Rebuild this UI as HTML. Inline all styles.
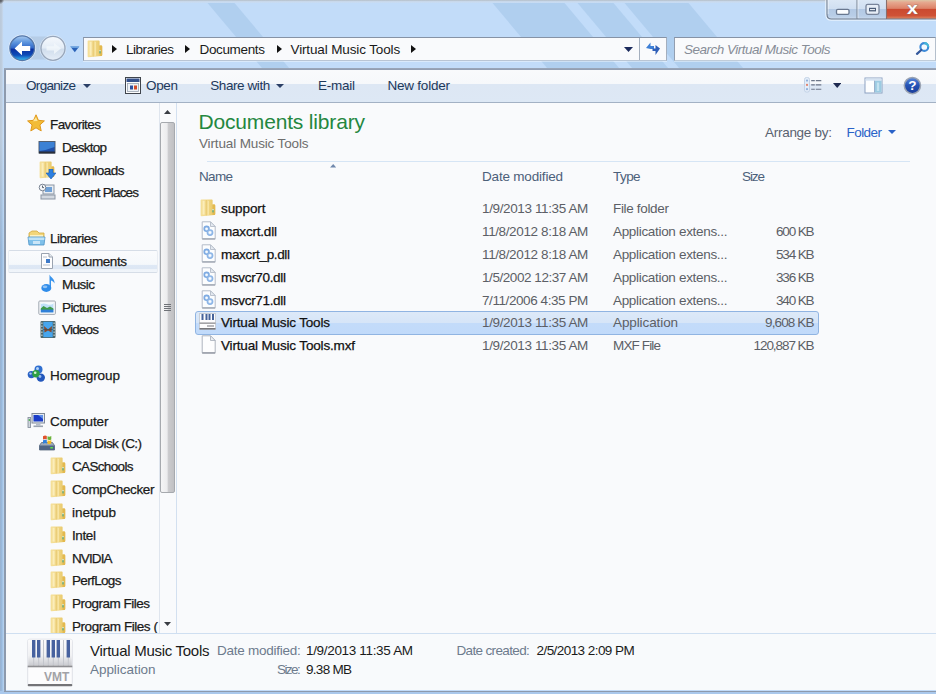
<!DOCTYPE html>
<html><head><meta charset="utf-8"><title>Virtual Music Tools</title>
<style>
html,body{margin:0;padding:0}
body{width:936px;height:694px;overflow:hidden;position:relative;background:#c2dcf9;font-family:"Liberation Sans", sans-serif;font-size:13.5px}
.abs,.t,.ic{position:absolute}
.t{height:20px;line-height:20px;white-space:nowrap}
.bd{-webkit-text-stroke:0.25px currentColor}
#glass{left:0;top:0;width:936px;height:694px;background:#c2dcf9;overflow:hidden}
.streak{position:absolute;top:0;height:110px;transform-origin:0 0;transform:skewX(40deg);}
</style></head><body>
<svg width="0" height="0" style="position:absolute"><defs>
<linearGradient id="fg" x1="0" y1="0" x2="1" y2="0"><stop offset="0" stop-color="#f5e09a"/><stop offset=".45" stop-color="#f2d98a"/><stop offset=".8" stop-color="#eacb6e"/><stop offset="1" stop-color="#e3bc56"/></linearGradient>
</defs></svg>

<div id="glass" class="abs">
<div class="streak" style="left:205px;width:27px;background:rgba(150,188,226,.40)"></div>
<div class="streak" style="left:490px;width:72px;background:rgba(150,188,226,.40)"></div>
<div class="streak" style="left:575px;width:36px;background:rgba(150,188,226,.40)"></div>
<div class="streak" style="left:622px;width:64px;background:rgba(150,188,226,.40)"></div>
</div>
<div class="abs" style="left:0;top:0;width:4px;height:694px;background:linear-gradient(90deg,#9eb3cf 0,#94b5d9 30%,#a4c3e5 62%,#b8d5f3 100%)"></div>
<div class="abs" style="left:0;top:0;width:4px;height:300px;background:linear-gradient(90deg,#bac9da 0,#bdccdd 35%,#c3d5ea 65%,#c2dcf9 90%);-webkit-mask-image:linear-gradient(#000 0,#000 45%,transparent 85%);mask-image:linear-gradient(#000 0,#000 45%,transparent 85%)"></div>
<div class="abs" style="left:0;top:0;width:936px;height:3px;background:linear-gradient(#b4c0cc 0,#bfcbd8 30%,#c8d8ea 45%,#c9dbf1 80%,#c2dcf9 100%)"></div>
<div class="abs" style="left:0;top:0;width:4px;height:4px;background:radial-gradient(circle at 0 0,#55595f 0,#6a6e75 35%,rgba(150,160,172,0) 75%)"></div>
<div class="abs" style="left:0;top:691px;width:936px;height:3px;background:#a9c8ec"></div>
<svg class="abs" style="left:824px;top:0" width="112" height="23" viewBox="0 0 112 23">
<defs>
<linearGradient id="cb" x1="0" y1="0" x2="0" y2="1"><stop offset="0" stop-color="#dbe7f5"/><stop offset=".46" stop-color="#d0dff1"/><stop offset=".5" stop-color="#b3c9e4"/><stop offset=".85" stop-color="#b9cee7"/><stop offset="1" stop-color="#cddcef"/></linearGradient>
<linearGradient id="cr" x1="0" y1="0" x2="0" y2="1"><stop offset="0" stop-color="#dcc6a6"/><stop offset=".12" stop-color="#e6a88f"/><stop offset=".44" stop-color="#dd8268"/><stop offset=".5" stop-color="#cb4a30"/><stop offset=".82" stop-color="#cf5236"/><stop offset="1" stop-color="#dd8a66"/></linearGradient>
<clipPath id="cc"><path d="M3 -2 H120 V19 H7.500 Q3 19 3 14.5 Z"/></clipPath>
</defs>
<path d="M2 -2 H121 V20 H7.500 Q2 20 2 14.5 Z" fill="none" stroke="#ffffff" stroke-opacity=".6" stroke-width="1.6"/>
<g clip-path="url(#cc)">
<rect x="3" y="0" width="30" height="19" fill="url(#cb)"/>
<rect x="33" y="0" width="30" height="19" fill="url(#cb)"/>
<rect x="62.500" y="0" width="60" height="19" fill="url(#cr)"/>
</g>
<path d="M3 -2 V14.5 Q3 19 7.500 19 H120" fill="none" stroke="#6e7b8c" stroke-width="1.1"/>
<path d="M33 0 V19" stroke="#7d8998" stroke-width="1.1"/><path d="M62.500 0 V19" stroke="#8a6f6c" stroke-width="1.1"/>
<path d="M34 0 V18 M4.200 0 V14" stroke="#fff" stroke-opacity=".5" stroke-width="1"/>
<rect x="12.500" y="9.300" width="12.500" height="5" rx="1.300" fill="#fbfcfe" stroke="#68778f" stroke-width="1.300"/>
<rect x="42" y="4.300" width="13" height="10" rx="1.800" fill="#e6edf6" stroke="#78849a" stroke-width="1.300"/>
<rect x="45" y="7.800" width="7" height="3.600" fill="#4c5d78"/><rect x="46" y="9.100" width="5" height="1" fill="#f4f7fb"/>
<text transform="translate(88.500 14.400) scale(1.15 1)" font-family="Liberation Sans, sans-serif" font-weight="bold" font-size="17" fill="#fdfdfd" stroke="#8a6a66" stroke-width=".7" paint-order="stroke" text-anchor="middle">x</text>
</svg>
<svg class="abs" style="left:6px;top:31px" width="78" height="34" viewBox="0 0 78 34">
<defs>
<linearGradient id="bk" x1="0" y1="0" x2="0" y2="1"><stop offset="0" stop-color="#a9c9ee"/><stop offset=".25" stop-color="#5f97de"/><stop offset=".5" stop-color="#2f66c8"/><stop offset=".53" stop-color="#0a2f9e"/><stop offset=".78" stop-color="#0f4cb8"/><stop offset="1" stop-color="#38c0f4"/></linearGradient>
<linearGradient id="fw" x1="0" y1="0" x2="0" y2="1"><stop offset="0" stop-color="#f6f9fd"/><stop offset=".48" stop-color="#e4edf7"/><stop offset=".54" stop-color="#d0ddec"/><stop offset="1" stop-color="#e6eef8"/></linearGradient>
</defs>
<rect x="14" y="5.500" width="36" height="23" rx="11" fill="#b2c8e0" opacity=".75"/>
<circle cx="16.200" cy="17.200" r="13.400" fill="none" stroke="#e6eff9" stroke-width="1" opacity=".85"/>
<circle cx="16.200" cy="17.200" r="12.300" fill="url(#bk)" stroke="#5577a8" stroke-width="1.300"/>
<path d="M8.600 17.400 L16 10.600 V14.900 H24.200 V19.900 H16 V24.200 Z" fill="#fff"/>
<circle cx="47" cy="17.300" r="13" fill="none" stroke="#e6eff9" stroke-width="1" opacity=".7"/>
<circle cx="47" cy="17.300" r="12" fill="url(#fw)" stroke="#98a6ba" stroke-width="1.300"/>
<path d="M55 17.400 L48 11.800 V15.300 H40.500 V19.500 H48 V23 Z" fill="#f3f7fb" opacity=".8"/>
<path d="M64.300 15.600 H73.300 L68.800 21.200 Z" fill="#2a62b8"/><path d="M64.300 15.600 H73.300 L72.300 16.800 H65.300Z" fill="#7db4ea"/>
</svg>
<div class="abs" style="left:83px;top:36.5px;width:583.5px;height:24px;box-sizing:border-box;background:#f9fafc;border:1px solid;border-color:#8693a6 #a4afbe #b9c5d4 #929eb0;border-top-width:1.5px;box-shadow:0 1px 0 rgba(255,255,255,.4)"></div>
<div class="abs" style="left:639px;top:38px;width:1px;height:21.5px;background:#a4afbe"></div>
<svg class="ic" style="left:87px;top:40px" width="16" height="18" viewBox="0 0 16 18">
<path d="M0.600 1.200 Q0.600 0.500 1.300 0.500 H11.800 Q12.600 0.500 12.600 1.300 V5.600 H14.300 Q15.200 5.600 15.200 6.500 V15 Q15.200 15.900 14.300 15.900 L1.500 17.200 Q0.600 17.200 0.600 16.300 Z" fill="url(#fg)"/>
<path d="M12.600 5.600 H14.300 Q15.200 5.600 15.200 6.500 V15 Q15.200 15.900 14.300 15.900 L12.600 16.100Z" fill="#e3b94f"/>
<rect x="2.600" y="1.800" width="2" height="13.800" fill="#fff6d0" opacity=".65"/>
<rect x="7.600" y="1.800" width="1.400" height="14" fill="#fff3c4" opacity=".5"/>
<rect x="5.800" y="1" width="1" height="15.600" fill="#d9ae48" opacity=".35"/>
<rect x="12.300" y="10" width="1.400" height="3.400" fill="#5fae8a"/><rect x="12.300" y="10" width="1.400" height="1.200" fill="#f6f0d0"/>
</svg>
<svg class="ic" style="left:112px;top:45px" width="5" height="8" viewBox="0 0 5 8"><path d="M0 0 L5 4 L0 8Z" fill="#111"/></svg>
<div class="t " style="left:126px;top:39.5px;font-size:13.5px;color:#1a1a1a;letter-spacing:-0.47px;">Libraries</div>
<svg class="ic" style="left:185px;top:45px" width="5" height="8" viewBox="0 0 5 8"><path d="M0 0 L5 4 L0 8Z" fill="#111"/></svg>
<div class="t " style="left:199.5px;top:39.5px;font-size:13.5px;color:#1a1a1a;letter-spacing:-0.35px;">Documents</div>
<svg class="ic" style="left:276.5px;top:45px" width="5" height="8" viewBox="0 0 5 8"><path d="M0 0 L5 4 L0 8Z" fill="#111"/></svg>
<div class="t " style="left:290.5px;top:39.5px;font-size:13.5px;color:#1a1a1a;letter-spacing:-0.13px;">Virtual Music Tools</div>
<svg class="ic" style="left:411px;top:45px" width="5" height="8" viewBox="0 0 5 8"><path d="M0 0 L5 4 L0 8Z" fill="#111"/></svg>
<svg class="ic" style="left:624px;top:47px" width="9" height="5" viewBox="0 0 9 5"><path d="M0 0 H9 L4.5 5Z" fill="#1b2a5c"/></svg>
<svg class="ic" style="left:644px;top:40px" width="18" height="18" viewBox="0 0 18 18">
<path d="M2 8 L6.5 2.5 L6.5 6 H10 V9 H6.5Z" fill="#3d7fd6"/><path d="M16 8.5 L11.5 15 V11 H8.5 V8.5 H11.5 V5Z" fill="#2f5fb8" transform="translate(0,0)"/></svg>
<div class="abs" style="left:674px;top:36.5px;width:261.5px;height:24px;box-sizing:border-box;background:#f9fafc;border:1px solid;border-color:#8693a6 #b4bfcc #c0ccd9 #929eb0;border-top-width:1.5px;box-shadow:0 1px 0 rgba(255,255,255,.4)"></div>
<div class="t " style="left:684px;top:39.5px;font-size:13.5px;color:#878d97;letter-spacing:-0.50px;font-style:italic;">Search Virtual Music Tools</div>
<svg class="ic" style="left:914px;top:40px" width="18" height="18" viewBox="0 0 18 18">
<circle cx="10.300" cy="7" r="3.900" fill="#f4f9fe" stroke="#3d8ad8" stroke-width="2.100"/><path d="M10.300 3.100 A3.900 3.900 0 0 1 14.200 7" stroke="#46b8d8" stroke-width="2.100" fill="none"/><path d="M7.300 10 L3 13.800" stroke="#34589c" stroke-width="2.300" stroke-linecap="round"/></svg>
<div class="abs" style="left:4px;top:68px;width:2px;height:624px;background:#8d9aad;border-radius:0 0 0 2px"></div>
<div class="abs" style="left:4px;top:68px;width:932px;height:2px;background:linear-gradient(#9ca8ba,#909cb0)"></div>
<div class="abs" style="left:6px;top:70px;width:930px;height:32px;background:linear-gradient(#f9fafc 0,#f6f8fb 44%,#dde7f4 45%,#dde8f5 100%)"></div>
<div class="abs" style="left:6px;top:102px;width:930px;height:1px;background:#a3b1c4"></div>
<div class="t " style="left:26px;top:76.0px;font-size:13.5px;color:#1e395b;letter-spacing:-0.68px;">Organize</div>
<svg class="ic" style="left:83px;top:84px" width="8" height="4" viewBox="0 0 8 4"><path d="M0 0H8L4 4Z" fill="#2b3f66"/></svg>
<svg class="ic" style="left:125px;top:77px" width="16" height="17" viewBox="0 0 16 17">
<rect x=".5" y=".5" width="15" height="16" fill="#fbfcfd" stroke="#3f444c"/><rect x="1.5" y="1.5" width="13" height="3.500" fill="#34508c"/>
<rect x="2.5" y="6.5" width="11" height="8" fill="#eef2f7" stroke="#9aa3b0" stroke-width=".8"/>
<rect x="5" y="8.5" width="3" height="4" fill="#2c4fa0"/><rect x="9" y="8.5" width="3" height="4" fill="#d24a2a"/></svg>
<div class="t " style="left:146px;top:76.0px;font-size:13.5px;color:#1e395b;letter-spacing:-0.34px;">Open</div>
<div class="t " style="left:210.3px;top:76.0px;font-size:13.5px;color:#1e395b;letter-spacing:-0.43px;">Share with</div>
<svg class="ic" style="left:276px;top:84px" width="8" height="4" viewBox="0 0 8 4"><path d="M0 0H8L4 4Z" fill="#2b3f66"/></svg>
<div class="t " style="left:318px;top:76.0px;font-size:13.5px;color:#1e395b;letter-spacing:-0.25px;">E-mail</div>
<div class="t " style="left:387.4px;top:76.0px;font-size:13.5px;color:#1e395b;letter-spacing:-0.21px;">New folder</div>
<svg class="ic" style="left:804px;top:77px" width="18" height="16" viewBox="0 0 18 16">
<rect x="0.500" y="0.500" width="5" height="14.600" rx="2" fill="#e4edf8" stroke="#c3d2e6"/>
<circle cx="3" cy="3.600" r="1.100" fill="#8fb0dc"/><circle cx="3" cy="7.900" r="1.100" fill="#e0806a"/><circle cx="3" cy="12.200" r="1.100" fill="#8fb0dc"/>
<path d="M7.200 3.600H10.800M11.800 3.600H17.300M7.200 7.900H10.800M11.800 7.900H17.300M7.200 12.200H10.800M11.800 12.200H17.300" stroke="#6c7688" stroke-width="1.100"/></svg>
<svg class="ic" style="left:832.600px;top:83px" width="8.400" height="5" viewBox="0 0 8.400 5"><path d="M0 0H8.400L4.200 5Z" fill="#1e2a50"/></svg>
<svg class="ic" style="left:864px;top:77px" width="19" height="17" viewBox="0 0 19 17">
<rect x="1" y="1" width="17" height="15" fill="#fdfeff" stroke="#8da2c2" stroke-width="1"/><rect x="1.500" y="1.500" width="16" height="2.200" fill="#d6e3f2"/>
<rect x="10.500" y="3.700" width="7" height="11.800" fill="#9ccbe2"/><rect x="12.800" y="5.500" width="2.400" height="8.500" fill="#c4e2f0"/>
<path d="M10.500 3.700V15.500" stroke="#8da2c2" stroke-width=".8"/></svg>
<svg class="ic" style="left:902px;top:75px" width="21" height="21" viewBox="0 0 21 21">
<defs><linearGradient id="hp" x1="0" y1="0" x2="0" y2="1"><stop offset="0" stop-color="#5a88dc"/><stop offset=".5" stop-color="#2452b4"/><stop offset="1" stop-color="#1a3c98"/></linearGradient></defs>
<circle cx="10.400" cy="10.600" r="8.100" fill="url(#hp)" stroke="#9aa3b2" stroke-width="1.500"/>
<text x="10.400" y="15.400" font-family="Liberation Sans, sans-serif" font-weight="bold" font-size="13.500" fill="#fff" text-anchor="middle">?</text></svg>
<div class="abs" style="left:6px;top:103px;width:930px;height:531px;background:#f9fafc"></div>
<div class="abs" style="left:159px;top:103px;width:1px;height:530px;background:#dfe5ee"></div>
<div class="abs" style="left:176px;top:103px;width:1px;height:530px;background:#d3e0f0"></div>
<div class="abs" style="left:160px;top:122px;width:15px;height:371px;box-sizing:border-box;border:1px solid #a6a9ae;border-radius:2px;background:linear-gradient(90deg,#f5f5f6 0,#ececee 46%,#cbcbce 58%,#c0c0c3 100%)"></div>
<div class="abs" style="left:164px;top:304px;width:7px;height:1px;background:#6f7278;box-shadow:0 2px 0 #6f7278,0 4px 0 #6f7278,0 6px 0 #6f7278"></div>
<svg class="ic" style="left:164px;top:110px" width="7" height="4" viewBox="0 0 7 4"><path d="M0 4H7L3.5 0Z" fill="#3a3d44"/></svg>
<svg class="ic" style="left:164px;top:622px" width="7" height="4" viewBox="0 0 7 4"><path d="M0 0H7L3.5 4Z" fill="#3a3d44"/></svg>
<div class="abs" style="left:8px;top:250px;width:150px;height:23px;box-sizing:border-box;border:1px solid #d6dde7;border-left-color:#e9edf3;border-right-color:#e9edf3;border-radius:2px;background:linear-gradient(#fafbfd 0,#f5f8fb 64%,#dee8f5 67%,#dde7f4 84%,#eef3f9 88%,#f1f5fa 100%)"></div>
<div class="abs" style="left:6px;top:103px;width:153px;height:530px;overflow:hidden"><div class="abs" style="left:-6px;top:-103px">
<svg class="ic" style="left:27px;top:114.0px" width="18" height="18" viewBox="0 0 18 18"><path d="M9 0.8 L11.4 6.3 L17.4 6.9 L12.9 10.9 L14.2 16.9 L9 13.8 L3.8 16.9 L5.1 10.9 L0.6 6.9 L6.6 6.3 Z" fill="#f2bc38" stroke="#e0981c" stroke-width="1"/><path d="M9 3 L10.6 7 L6 7.3 Z" fill="#fde79a"/></svg>
<div class="t bd" style="left:50px;top:115.0px;font-size:13.5px;color:#1a1a1a;letter-spacing:-0.57px;">Favorites</div>
<svg class="ic" style="left:38px;top:138.62px" width="18" height="18" viewBox="0 0 18 18"><rect x="1" y="2.5" width="16" height="11.5" fill="#1f4fa8" stroke="#55606f" stroke-width="1"/><path d="M1.5 3 H16.5 V8 Q9 11 1.5 12Z" fill="#3f86d8" opacity=".9"/><rect x="1" y="12.5" width="16" height="2" fill="#2a2f3a"/></svg>
<div class="t bd" style="left:62px;top:137.82px;font-size:13.5px;color:#1a1a1a;letter-spacing:-0.76px;">Desktop</div>
<svg class="ic" style="left:39px;top:160.64px" width="16" height="18" viewBox="0 0 16 18">
<path d="M0.600 1.200 Q0.600 0.500 1.300 0.500 H11.800 Q12.600 0.500 12.600 1.300 V5.600 H14.300 Q15.200 5.600 15.200 6.500 V15 Q15.200 15.900 14.300 15.900 L1.500 17.200 Q0.600 17.200 0.600 16.300 Z" fill="url(#fg)"/>
<path d="M12.600 5.600 H14.300 Q15.200 5.600 15.200 6.500 V15 Q15.200 15.900 14.300 15.900 L12.600 16.100Z" fill="#e3b94f"/>
<rect x="2.600" y="1.800" width="2" height="13.800" fill="#fff6d0" opacity=".65"/>
<rect x="7.600" y="1.800" width="1.400" height="14" fill="#fff3c4" opacity=".5"/>
<rect x="5.800" y="1" width="1" height="15.600" fill="#d9ae48" opacity=".35"/>
<rect x="12.300" y="10" width="1.400" height="3.400" fill="#5fae8a"/><rect x="12.300" y="10" width="1.400" height="1.200" fill="#f6f0d0"/>
</svg><svg class="ic" style="left:46px;top:168.64px" width="10" height="10" viewBox="0 0 10 10"><path d="M3 0 H7 V4 H10 L5 10 L0 4 H3Z" fill="#2c7fe0" stroke="#1b5cb4" stroke-width=".6"/></svg>
<div class="t bd" style="left:62px;top:160.64px;font-size:13.5px;color:#1a1a1a;letter-spacing:-0.54px;">Downloads</div>
<svg class="ic" style="left:38px;top:183.46px" width="18" height="18" viewBox="0 0 18 18"><rect x="5" y="2" width="11" height="9" fill="#e8edf3" stroke="#8b95a3"/><rect x="7" y="4" width="7" height="5" fill="#6fa0d6"/><circle cx="4.5" cy="4.5" r="3.3" fill="#f4f6f9" stroke="#7b8594"/><path d="M4.5 2.6 V4.6 H6" stroke="#4a5360" stroke-width=".9" fill="none"/><rect x="3" y="12" width="14" height="4" fill="#d3d9e1" stroke="#8b95a3"/></svg>
<div class="t bd" style="left:62px;top:183.46px;font-size:13.5px;color:#1a1a1a;letter-spacing:-0.84px;">Recent Places</div>
<svg class="ic" style="left:27px;top:229.1px" width="19" height="18" viewBox="0 0 19 18"><path d="M2 4 L5 2 H10 L12 4 H17 V9 H2Z" fill="#f2d67a" stroke="#d2a83c" stroke-width=".8"/><rect x="3" y="6" width="13" height="5" fill="#fbf1c4"/><path d="M1 8 H18 L17 16 H2Z" fill="#7fc0ea" stroke="#4d93c7" stroke-width=".8"/><path d="M1.5 8.5 H17.5 L17.2 11 H1.8Z" fill="#bfe3f7"/><rect x="6" y="12" width="7" height="3" fill="#eaf5fc" opacity=".7"/></svg>
<div class="t bd" style="left:50px;top:229.1px;font-size:13.5px;color:#1a1a1a;letter-spacing:-0.54px;">Libraries</div>
<svg class="ic" style="left:38px;top:251.92000000000002px" width="18" height="18" viewBox="0 0 18 18"><path d="M3.5 1.5 H11 L14.5 5 V16.5 H3.5Z" fill="#fdfdfe" stroke="#9aa3b0"/><path d="M11 1.5 V5 H14.5" fill="#e6eaf0" stroke="#9aa3b0"/><rect x="8" y="7" width="4" height="4" fill="#3d79c8"/><path d="M5 5 H9 M5 13 H12" stroke="#b8c0cc" stroke-width="1"/></svg>
<div class="t bd" style="left:62px;top:251.92px;font-size:13.5px;color:#1a1a1a;letter-spacing:-0.41px;">Documents</div>
<svg class="ic" style="left:39px;top:273.74px" width="19" height="19" viewBox="0 0 19 19"><path d="M10.500 0.500 C11.500 3.500 16 4.500 15.500 9.500 C14.300 6.800 12.600 7 12 6.400 V14 H10.500Z" fill="#3a94ec"/><ellipse cx="7.300" cy="14" rx="5" ry="3.900" fill="#2f8cea"/><ellipse cx="6" cy="12.800" rx="2.400" ry="1.400" fill="#a8d0f8" opacity=".8"/></svg>
<div class="t bd" style="left:62px;top:274.74px;font-size:13.5px;color:#1a1a1a;letter-spacing:-0.57px;">Music</div>
<svg class="ic" style="left:38px;top:297.56px" width="18" height="18" viewBox="0 0 18 18"><rect x="0.800" y="3" width="16.600" height="13.400" rx="1" fill="#f6f7f9" stroke="#a2a8b2"/><rect x="2.800" y="5" width="12.600" height="9.400" fill="#bfe0f8"/><path d="M2.800 6 Q6 4.800 9 6.200 T15.400 5.800 V5 H2.800Z" fill="#f4fafe"/><path d="M2.800 10.500 L5.500 8 L9 10 L12 8.600 L15.400 10.600 V12 H2.800Z" fill="#3f9a4a"/><rect x="2.800" y="11.600" width="12.600" height="2.800" fill="#2f7fd8"/></svg>
<div class="t bd" style="left:62px;top:297.56px;font-size:13.5px;color:#1a1a1a;letter-spacing:-0.61px;">Pictures</div>
<svg class="ic" style="left:38.5px;top:319.88px" width="18" height="19" viewBox="0 0 18 19"><rect x="1.500" y="1" width="15" height="17" rx="1" fill="#4c666c"/><rect x="4.300" y="1.800" width="9.400" height="15.400" fill="#46a6ee"/><path d="M5 6 L9 9.500 L13 6 L12.500 12.500 L9 10.500 L5.500 12.500Z" fill="#8a4a2c"/><rect x="4.300" y="9" width="9.400" height="1" fill="#3a4e54" opacity=".7"/><path d="M2.900 2.500v1.600M2.900 5.500v1.600M2.900 8.500v1.600M2.900 11.500v1.600M2.900 14.500v1.600M15.100 2.500v1.600M15.100 5.500v1.600M15.100 8.500v1.600M15.100 11.500v1.600M15.100 14.500v1.600" stroke="#c8dadc" stroke-width="1.100"/></svg>
<div class="t bd" style="left:62px;top:320.38px;font-size:13.5px;color:#1a1a1a;letter-spacing:-0.81px;">Videos</div>
<svg class="ic" style="left:27px;top:365.02px" width="19" height="18" viewBox="0 0 19 18"><circle cx="11.500" cy="4.600" r="4" fill="#2f6ed0"/><circle cx="4.300" cy="9.600" r="3.600" fill="#2a62c4"/><circle cx="13.800" cy="12.600" r="4.200" fill="#2458bc"/><circle cx="9" cy="8.800" r="3.800" fill="#2ea043"/><circle cx="10.500" cy="3.400" r="1.500" fill="#b4d4f6"/><circle cx="3.500" cy="8.600" r="1.200" fill="#a8c8f0"/><circle cx="8.200" cy="7.800" r="1.300" fill="#d8f4d8"/><circle cx="13" cy="11.500" r="1.400" fill="#9cbcec"/></svg>
<div class="t bd" style="left:50px;top:366.02px;font-size:13.5px;color:#1a1a1a;letter-spacing:-0.07px;">Homegroup</div>
<svg class="ic" style="left:27px;top:411.66px" width="18" height="18" viewBox="0 0 18 18"><rect x="5" y="1.500" width="12.500" height="9.500" fill="#e4e9ef" stroke="#7e8897"/><rect x="6.500" y="3" width="9.500" height="6.500" fill="#1a3cc8"/><path d="M11 3H16V7Z" fill="#5f8fe8"/><rect x="9" y="11.500" width="4.500" height="2" fill="#b4bcc8"/><rect x="6.500" y="13.500" width="9.500" height="1.600" fill="#9aa3b0"/><rect x="1" y="5.500" width="2.600" height="10" fill="#cfd5dd" stroke="#7e8897" stroke-width=".8"/><rect x="1.700" y="7" width="1.200" height="2" fill="#4caf50"/></svg>
<div class="t bd" style="left:50px;top:411.66px;font-size:13.5px;color:#1a1a1a;letter-spacing:-0.11px;">Computer</div>
<svg class="ic" style="left:38px;top:434.48px" width="18" height="18" viewBox="0 0 18 18"><path d="M1.500 11.500 L3.500 8.500 H14.500 L16.500 11.500 V16 H1.500Z" fill="#9aa8ba" stroke="#5c6a7e" stroke-width=".8"/><rect x="1.500" y="11.500" width="15" height="4.500" fill="#4f6484"/><path d="M5 2.200 Q7 1 8.800 2 V5.400 Q7 4.400 5 5.600Z" fill="#e0522c"/><path d="M9.500 2.200 Q11.300 3.200 13.300 2 V5.400 Q11.300 6.600 9.500 5.600Z" fill="#6cb33a"/><path d="M5 6.300 Q7 5.100 8.800 6.100 V9.500 Q7 8.500 5 9.700Z" fill="#2f80dc"/><path d="M9.500 6.300 Q11.300 7.300 13.300 6.100 V9.500 Q11.300 10.700 9.500 9.700Z" fill="#f2bb28"/><rect x="12.300" y="13" width="2.600" height="1.500" fill="#5fe04c"/></svg>
<div class="t bd" style="left:62px;top:434.48px;font-size:13.5px;color:#1a1a1a;letter-spacing:-0.61px;">Local Disk (C:)</div>
<svg class="ic" style="left:50px;top:457.3px" width="16" height="18" viewBox="0 0 16 18">
<path d="M0.600 1.200 Q0.600 0.500 1.300 0.500 H11.800 Q12.600 0.500 12.600 1.300 V5.600 H14.300 Q15.200 5.600 15.200 6.500 V15 Q15.200 15.900 14.300 15.900 L1.500 17.200 Q0.600 17.200 0.600 16.300 Z" fill="url(#fg)"/>
<path d="M12.600 5.600 H14.300 Q15.200 5.600 15.200 6.500 V15 Q15.200 15.900 14.300 15.900 L12.600 16.100Z" fill="#e3b94f"/>
<rect x="2.600" y="1.800" width="2" height="13.800" fill="#fff6d0" opacity=".65"/>
<rect x="7.600" y="1.800" width="1.400" height="14" fill="#fff3c4" opacity=".5"/>
<rect x="5.800" y="1" width="1" height="15.600" fill="#d9ae48" opacity=".35"/>
<rect x="12.300" y="10" width="1.400" height="3.400" fill="#5fae8a"/><rect x="12.300" y="10" width="1.400" height="1.200" fill="#f6f0d0"/>
</svg>
<div class="t bd" style="left:72px;top:457.3px;font-size:13.5px;color:#1a1a1a;letter-spacing:-0.66px;">CASchools</div>
<svg class="ic" style="left:50px;top:480.12px" width="16" height="18" viewBox="0 0 16 18">
<path d="M0.600 1.200 Q0.600 0.500 1.300 0.500 H11.800 Q12.600 0.500 12.600 1.300 V5.600 H14.300 Q15.200 5.600 15.200 6.500 V15 Q15.200 15.900 14.300 15.900 L1.500 17.200 Q0.600 17.200 0.600 16.300 Z" fill="url(#fg)"/>
<path d="M12.600 5.600 H14.300 Q15.200 5.600 15.200 6.500 V15 Q15.200 15.900 14.300 15.900 L12.600 16.100Z" fill="#e3b94f"/>
<rect x="2.600" y="1.800" width="2" height="13.800" fill="#fff6d0" opacity=".65"/>
<rect x="7.600" y="1.800" width="1.400" height="14" fill="#fff3c4" opacity=".5"/>
<rect x="5.800" y="1" width="1" height="15.600" fill="#d9ae48" opacity=".35"/>
<rect x="12.300" y="10" width="1.400" height="3.400" fill="#5fae8a"/><rect x="12.300" y="10" width="1.400" height="1.200" fill="#f6f0d0"/>
</svg>
<div class="t bd" style="left:72px;top:480.12px;font-size:13.5px;color:#1a1a1a;letter-spacing:-0.38px;">CompChecker</div>
<svg class="ic" style="left:50px;top:502.94px" width="16" height="18" viewBox="0 0 16 18">
<path d="M0.600 1.200 Q0.600 0.500 1.300 0.500 H11.800 Q12.600 0.500 12.600 1.300 V5.600 H14.300 Q15.200 5.600 15.200 6.500 V15 Q15.200 15.900 14.300 15.900 L1.500 17.200 Q0.600 17.200 0.600 16.300 Z" fill="url(#fg)"/>
<path d="M12.600 5.600 H14.300 Q15.200 5.600 15.200 6.500 V15 Q15.200 15.900 14.300 15.900 L12.600 16.100Z" fill="#e3b94f"/>
<rect x="2.600" y="1.800" width="2" height="13.800" fill="#fff6d0" opacity=".65"/>
<rect x="7.600" y="1.800" width="1.400" height="14" fill="#fff3c4" opacity=".5"/>
<rect x="5.800" y="1" width="1" height="15.600" fill="#d9ae48" opacity=".35"/>
<rect x="12.300" y="10" width="1.400" height="3.400" fill="#5fae8a"/><rect x="12.300" y="10" width="1.400" height="1.200" fill="#f6f0d0"/>
</svg>
<div class="t bd" style="left:72px;top:502.94px;font-size:13.5px;color:#1a1a1a;letter-spacing:-0.05px;">inetpub</div>
<svg class="ic" style="left:50px;top:525.76px" width="16" height="18" viewBox="0 0 16 18">
<path d="M0.600 1.200 Q0.600 0.500 1.300 0.500 H11.800 Q12.600 0.500 12.600 1.300 V5.600 H14.300 Q15.200 5.600 15.200 6.500 V15 Q15.200 15.900 14.300 15.900 L1.500 17.200 Q0.600 17.200 0.600 16.300 Z" fill="url(#fg)"/>
<path d="M12.600 5.600 H14.300 Q15.200 5.600 15.200 6.500 V15 Q15.200 15.900 14.300 15.900 L12.600 16.100Z" fill="#e3b94f"/>
<rect x="2.600" y="1.800" width="2" height="13.800" fill="#fff6d0" opacity=".65"/>
<rect x="7.600" y="1.800" width="1.400" height="14" fill="#fff3c4" opacity=".5"/>
<rect x="5.800" y="1" width="1" height="15.600" fill="#d9ae48" opacity=".35"/>
<rect x="12.300" y="10" width="1.400" height="3.400" fill="#5fae8a"/><rect x="12.300" y="10" width="1.400" height="1.200" fill="#f6f0d0"/>
</svg>
<div class="t bd" style="left:72px;top:525.76px;font-size:13.5px;color:#1a1a1a;letter-spacing:-0.38px;">Intel</div>
<svg class="ic" style="left:50px;top:548.5799999999999px" width="16" height="18" viewBox="0 0 16 18">
<path d="M0.600 1.200 Q0.600 0.500 1.300 0.500 H11.800 Q12.600 0.500 12.600 1.300 V5.600 H14.300 Q15.200 5.600 15.200 6.500 V15 Q15.200 15.900 14.300 15.900 L1.500 17.200 Q0.600 17.200 0.600 16.300 Z" fill="url(#fg)"/>
<path d="M12.600 5.600 H14.300 Q15.200 5.600 15.200 6.500 V15 Q15.200 15.900 14.300 15.900 L12.600 16.100Z" fill="#e3b94f"/>
<rect x="2.600" y="1.800" width="2" height="13.800" fill="#fff6d0" opacity=".65"/>
<rect x="7.600" y="1.800" width="1.400" height="14" fill="#fff3c4" opacity=".5"/>
<rect x="5.800" y="1" width="1" height="15.600" fill="#d9ae48" opacity=".35"/>
<rect x="12.300" y="10" width="1.400" height="3.400" fill="#5fae8a"/><rect x="12.300" y="10" width="1.400" height="1.200" fill="#f6f0d0"/>
</svg>
<div class="t bd" style="left:72px;top:548.58px;font-size:13.5px;color:#1a1a1a;letter-spacing:-0.90px;">NVIDIA</div>
<svg class="ic" style="left:50px;top:571.4px" width="16" height="18" viewBox="0 0 16 18">
<path d="M0.600 1.200 Q0.600 0.500 1.300 0.500 H11.800 Q12.600 0.500 12.600 1.300 V5.600 H14.300 Q15.200 5.600 15.200 6.500 V15 Q15.200 15.900 14.300 15.900 L1.500 17.200 Q0.600 17.200 0.600 16.300 Z" fill="url(#fg)"/>
<path d="M12.600 5.600 H14.300 Q15.200 5.600 15.200 6.500 V15 Q15.200 15.900 14.300 15.900 L12.600 16.100Z" fill="#e3b94f"/>
<rect x="2.600" y="1.800" width="2" height="13.800" fill="#fff6d0" opacity=".65"/>
<rect x="7.600" y="1.800" width="1.400" height="14" fill="#fff3c4" opacity=".5"/>
<rect x="5.800" y="1" width="1" height="15.600" fill="#d9ae48" opacity=".35"/>
<rect x="12.300" y="10" width="1.400" height="3.400" fill="#5fae8a"/><rect x="12.300" y="10" width="1.400" height="1.200" fill="#f6f0d0"/>
</svg>
<div class="t bd" style="left:72px;top:571.4px;font-size:13.5px;color:#1a1a1a;letter-spacing:-0.65px;">PerfLogs</div>
<svg class="ic" style="left:50px;top:594.22px" width="16" height="18" viewBox="0 0 16 18">
<path d="M0.600 1.200 Q0.600 0.500 1.300 0.500 H11.800 Q12.600 0.500 12.600 1.300 V5.600 H14.300 Q15.200 5.600 15.200 6.500 V15 Q15.200 15.900 14.300 15.900 L1.500 17.200 Q0.600 17.200 0.600 16.300 Z" fill="url(#fg)"/>
<path d="M12.600 5.600 H14.300 Q15.200 5.600 15.200 6.500 V15 Q15.200 15.900 14.300 15.900 L12.600 16.100Z" fill="#e3b94f"/>
<rect x="2.600" y="1.800" width="2" height="13.800" fill="#fff6d0" opacity=".65"/>
<rect x="7.600" y="1.800" width="1.400" height="14" fill="#fff3c4" opacity=".5"/>
<rect x="5.800" y="1" width="1" height="15.600" fill="#d9ae48" opacity=".35"/>
<rect x="12.300" y="10" width="1.400" height="3.400" fill="#5fae8a"/><rect x="12.300" y="10" width="1.400" height="1.200" fill="#f6f0d0"/>
</svg>
<div class="t bd" style="left:72px;top:594.22px;font-size:13.5px;color:#1a1a1a;letter-spacing:-0.50px;">Program Files</div>
<svg class="ic" style="left:50px;top:617.04px" width="16" height="18" viewBox="0 0 16 18">
<path d="M0.600 1.200 Q0.600 0.500 1.300 0.500 H11.800 Q12.600 0.500 12.600 1.300 V5.600 H14.300 Q15.200 5.600 15.200 6.500 V15 Q15.200 15.900 14.300 15.900 L1.500 17.200 Q0.600 17.200 0.600 16.300 Z" fill="url(#fg)"/>
<path d="M12.600 5.600 H14.300 Q15.200 5.600 15.200 6.500 V15 Q15.200 15.900 14.300 15.900 L12.600 16.100Z" fill="#e3b94f"/>
<rect x="2.600" y="1.800" width="2" height="13.800" fill="#fff6d0" opacity=".65"/>
<rect x="7.600" y="1.800" width="1.400" height="14" fill="#fff3c4" opacity=".5"/>
<rect x="5.800" y="1" width="1" height="15.600" fill="#d9ae48" opacity=".35"/>
<rect x="12.300" y="10" width="1.400" height="3.400" fill="#5fae8a"/><rect x="12.300" y="10" width="1.400" height="1.200" fill="#f6f0d0"/>
</svg>
<div class="t bd" style="left:72px;top:617.04px;font-size:13.5px;color:#1a1a1a;letter-spacing:-0.45px;">Program Files (</div>
</div></div>
<div class="t " style="left:198.5px;top:112.3px;font-size:21px;color:#24873f;letter-spacing:-0.17px;height:30px;line-height:30px;margin-top:-5px;">Documents library</div>
<div class="t " style="left:199px;top:134.0px;font-size:13.5px;color:#6d6d6d;letter-spacing:-0.14px;">Virtual Music Tools</div>
<div class="t " style="left:765px;top:122.5px;font-size:13.5px;color:#5a6270;letter-spacing:-0.28px;">Arrange by:</div>
<div class="t " style="left:846.5px;top:122.5px;font-size:13.5px;color:#2a62c8;letter-spacing:-0.55px;">Folder</div>
<svg class="ic" style="left:888px;top:130px" width="8" height="4" viewBox="0 0 8 4"><path d="M0 0H8L4 4Z" fill="#2a62c8"/></svg>
<div class="abs" style="left:207px;top:161px;width:703px;height:1px;background:#d6e5f5"></div>
<svg class="ic" style="left:329.500px;top:164.300px" width="6.400" height="3.600" viewBox="0 0 7 4"><path d="M0 4H7L3.5 0Z" fill="#7088ac"/></svg>
<div class="t " style="left:199px;top:167.0px;font-size:13.5px;color:#4c607a;letter-spacing:-0.67px;">Name</div>
<div class="t " style="left:482px;top:167.0px;font-size:13.5px;color:#4c607a;letter-spacing:-0.19px;">Date modified</div>
<div class="t " style="left:613px;top:167.0px;font-size:13.5px;color:#4c607a;letter-spacing:-0.56px;">Type</div>
<div class="t " style="left:742px;top:167.0px;font-size:13.5px;color:#4c607a;letter-spacing:-1.09px;">Size</div>
<div class="abs" style="left:195px;top:311px;width:624px;height:23.5px;box-sizing:border-box;border:1px solid #90b4e2;border-radius:3px;background:linear-gradient(#dde9f8 0,#d6e5f8 48%,#c3dbfa 52%,#c1dafa 100%)"></div>
<svg class="ic" style="left:200px;top:198.6px" width="16" height="18" viewBox="0 0 16 18">
<path d="M0.600 1.200 Q0.600 0.500 1.300 0.500 H11.800 Q12.600 0.500 12.600 1.300 V5.600 H14.300 Q15.200 5.600 15.200 6.500 V15 Q15.200 15.900 14.300 15.900 L1.500 17.200 Q0.600 17.200 0.600 16.300 Z" fill="url(#fg)"/>
<path d="M12.600 5.600 H14.300 Q15.200 5.600 15.200 6.500 V15 Q15.200 15.900 14.300 15.900 L12.600 16.100Z" fill="#e3b94f"/>
<rect x="2.600" y="1.800" width="2" height="13.800" fill="#fff6d0" opacity=".65"/>
<rect x="7.600" y="1.800" width="1.400" height="14" fill="#fff3c4" opacity=".5"/>
<rect x="5.800" y="1" width="1" height="15.600" fill="#d9ae48" opacity=".35"/>
<rect x="12.300" y="10" width="1.400" height="3.400" fill="#5fae8a"/><rect x="12.300" y="10" width="1.400" height="1.200" fill="#f6f0d0"/>
</svg>
<div class="t bd" style="left:221px;top:199.3px;font-size:13.5px;color:#111;letter-spacing:-0.09px;">support</div>
<div class="t " style="left:482px;top:199.3px;font-size:13.5px;color:#5c5f66;letter-spacing:-0.38px;">1/9/2013 11:35 AM</div>
<div class="t " style="left:613px;top:199.3px;font-size:13.5px;color:#5c5f66;letter-spacing:-0.33px;">File folder</div>
<svg class="ic" style="left:200px;top:221.1px" width="16" height="19" viewBox="0 0 16 19">
<path d="M2.200 0.800 H10.500 L15.200 5.500 V17.800 H2.200 Z" fill="#fcfdfe" stroke="#b4bcc8" stroke-width="1"/>
<path d="M10.500 0.800 V5.500 H15.200 Z" fill="#e4e9f0" stroke="#b4bcc8" stroke-width=".9"/>
<path d="M2.200 18 H15.200" stroke="#9aa1ac" stroke-width="1.200"/>
<circle cx="6.600" cy="7.800" r="2.400" fill="#dbe9f9" stroke="#7fabe2" stroke-width="1.600"/>
<circle cx="10" cy="11.600" r="2.600" fill="#dbe9f9" stroke="#8db5e6" stroke-width="1.600"/>
<circle cx="6.600" cy="7.800" r=".9" fill="#fdfefe"/><circle cx="10" cy="11.600" r="1" fill="#fdfefe"/>
</svg>
<div class="t bd" style="left:221px;top:222.1px;font-size:13.5px;color:#111;letter-spacing:-0.20px;">maxcrt.dll</div>
<div class="t " style="left:482px;top:222.1px;font-size:13.5px;color:#5c5f66;letter-spacing:-0.38px;">11/8/2012 8:18 AM</div>
<div class="t " style="left:613px;top:222.1px;font-size:13.5px;color:#5c5f66;letter-spacing:-0.32px;">Application extens...</div>
<div class="t " style="left:776px;top:222.1px;font-size:13.5px;color:#5c5f66;letter-spacing:-1.16px;">600 KB</div>
<svg class="ic" style="left:200px;top:243.9px" width="16" height="19" viewBox="0 0 16 19">
<path d="M2.200 0.800 H10.500 L15.200 5.500 V17.800 H2.200 Z" fill="#fcfdfe" stroke="#b4bcc8" stroke-width="1"/>
<path d="M10.500 0.800 V5.500 H15.200 Z" fill="#e4e9f0" stroke="#b4bcc8" stroke-width=".9"/>
<path d="M2.200 18 H15.200" stroke="#9aa1ac" stroke-width="1.200"/>
<circle cx="6.600" cy="7.800" r="2.400" fill="#dbe9f9" stroke="#7fabe2" stroke-width="1.600"/>
<circle cx="10" cy="11.600" r="2.600" fill="#dbe9f9" stroke="#8db5e6" stroke-width="1.600"/>
<circle cx="6.600" cy="7.800" r=".9" fill="#fdfefe"/><circle cx="10" cy="11.600" r="1" fill="#fdfefe"/>
</svg>
<div class="t bd" style="left:221px;top:244.9px;font-size:13.5px;color:#111;letter-spacing:-0.34px;">maxcrt_p.dll</div>
<div class="t " style="left:482px;top:244.9px;font-size:13.5px;color:#5c5f66;letter-spacing:-0.38px;">11/8/2012 8:18 AM</div>
<div class="t " style="left:613px;top:244.9px;font-size:13.5px;color:#5c5f66;letter-spacing:-0.32px;">Application extens...</div>
<div class="t " style="left:776px;top:244.9px;font-size:13.5px;color:#5c5f66;letter-spacing:-1.16px;">534 KB</div>
<svg class="ic" style="left:200px;top:266.7px" width="16" height="19" viewBox="0 0 16 19">
<path d="M2.200 0.800 H10.500 L15.200 5.500 V17.800 H2.200 Z" fill="#fcfdfe" stroke="#b4bcc8" stroke-width="1"/>
<path d="M10.500 0.800 V5.500 H15.200 Z" fill="#e4e9f0" stroke="#b4bcc8" stroke-width=".9"/>
<path d="M2.200 18 H15.200" stroke="#9aa1ac" stroke-width="1.200"/>
<circle cx="6.600" cy="7.800" r="2.400" fill="#dbe9f9" stroke="#7fabe2" stroke-width="1.600"/>
<circle cx="10" cy="11.600" r="2.600" fill="#dbe9f9" stroke="#8db5e6" stroke-width="1.600"/>
<circle cx="6.600" cy="7.800" r=".9" fill="#fdfefe"/><circle cx="10" cy="11.600" r="1" fill="#fdfefe"/>
</svg>
<div class="t bd" style="left:221px;top:267.7px;font-size:13.5px;color:#111;letter-spacing:-0.33px;">msvcr70.dll</div>
<div class="t " style="left:482px;top:267.7px;font-size:13.5px;color:#5c5f66;letter-spacing:-0.44px;">1/5/2002 12:37 AM</div>
<div class="t " style="left:613px;top:267.7px;font-size:13.5px;color:#5c5f66;letter-spacing:-0.32px;">Application extens...</div>
<div class="t " style="left:776px;top:267.7px;font-size:13.5px;color:#5c5f66;letter-spacing:-1.16px;">336 KB</div>
<svg class="ic" style="left:200px;top:289.5px" width="16" height="19" viewBox="0 0 16 19">
<path d="M2.200 0.800 H10.500 L15.200 5.500 V17.800 H2.200 Z" fill="#fcfdfe" stroke="#b4bcc8" stroke-width="1"/>
<path d="M10.500 0.800 V5.500 H15.200 Z" fill="#e4e9f0" stroke="#b4bcc8" stroke-width=".9"/>
<path d="M2.200 18 H15.200" stroke="#9aa1ac" stroke-width="1.200"/>
<circle cx="6.600" cy="7.800" r="2.400" fill="#dbe9f9" stroke="#7fabe2" stroke-width="1.600"/>
<circle cx="10" cy="11.600" r="2.600" fill="#dbe9f9" stroke="#8db5e6" stroke-width="1.600"/>
<circle cx="6.600" cy="7.800" r=".9" fill="#fdfefe"/><circle cx="10" cy="11.600" r="1" fill="#fdfefe"/>
</svg>
<div class="t bd" style="left:221px;top:290.5px;font-size:13.5px;color:#111;letter-spacing:-0.33px;">msvcr71.dll</div>
<div class="t " style="left:482px;top:290.5px;font-size:13.5px;color:#5c5f66;letter-spacing:-0.42px;">7/11/2006 4:35 PM</div>
<div class="t " style="left:613px;top:290.5px;font-size:13.5px;color:#5c5f66;letter-spacing:-0.32px;">Application extens...</div>
<div class="t " style="left:776px;top:290.5px;font-size:13.5px;color:#5c5f66;letter-spacing:-1.16px;">340 KB</div>
<svg class="ic" style="left:199px;top:313.3px" width="17" height="17" viewBox="0 0 17 17">
<rect x="0.5" y="0.5" width="16" height="15.5" fill="#fdfdfe" stroke="#c9ced6" stroke-width="1"/>
<rect x="2.5" y="1" width="2" height="6" fill="#46639a"/><rect x="6.5" y="1" width="2" height="6" fill="#46639a"/>
<rect x="9.5" y="1" width="2" height="6" fill="#46639a"/><rect x="13" y="1" width="2" height="6" fill="#46639a"/>
<rect x="0.5" y="9.5" width="16" height="1.3" fill="#8e8e92"/>
<rect x="8" y="12" width="7" height="2" fill="#b9b9bd"/>
<rect x="0.5" y="15" width="16" height="1.6" fill="#77777c"/></svg>
<div class="t bd" style="left:221px;top:313.3px;font-size:13.5px;color:#111;letter-spacing:-0.17px;">Virtual Music Tools</div>
<div class="t " style="left:482px;top:313.3px;font-size:13.5px;color:#5c5f66;letter-spacing:-0.38px;">1/9/2013 11:35 AM</div>
<div class="t " style="left:613px;top:313.3px;font-size:13.5px;color:#5c5f66;letter-spacing:-0.10px;">Application</div>
<div class="t " style="left:765px;top:313.3px;font-size:13.5px;color:#5c5f66;letter-spacing:-0.86px;">9,608 KB</div>
<svg class="ic" style="left:200px;top:335.1px" width="16" height="19" viewBox="0 0 16 19">
<path d="M2.200 0.800 H10.500 L15.200 5.500 V17.800 H2.200 Z" fill="#fdfdfe" stroke="#aeb4be" stroke-width="1"/>
<path d="M10.500 0.800 V5.500 H15.200 Z" fill="#eceff3" stroke="#aeb4be" stroke-width=".9"/>
<path d="M2.200 18 H15.200" stroke="#8e949e" stroke-width="1.300"/></svg>
<div class="t bd" style="left:221px;top:336.1px;font-size:13.5px;color:#111;letter-spacing:-0.16px;">Virtual Music Tools.mxf</div>
<div class="t " style="left:482px;top:336.1px;font-size:13.5px;color:#5c5f66;letter-spacing:-0.38px;">1/9/2013 11:35 AM</div>
<div class="t " style="left:613px;top:336.1px;font-size:13.5px;color:#5c5f66;letter-spacing:-0.86px;">MXF File</div>
<div class="t " style="left:753.5px;top:336.1px;font-size:13.5px;color:#5c5f66;letter-spacing:-1.06px;">120,887 KB</div>
<div class="abs" style="left:6px;top:633px;width:930px;height:1px;background:#cfdff1"></div>
<div class="abs" style="left:6px;top:634px;width:930px;height:56px;background:#f8fafc"></div>
<div class="abs" style="left:4px;top:690.5px;width:932px;height:1.5px;background:#8d9aad"></div>
<svg class="ic" style="left:27px;top:638px" width="46" height="50" viewBox="0 0 46 50">
<defs><linearGradient id="wk" x1="0" y1="0" x2="0" y2="1"><stop offset="0" stop-color="#fbfbfc"/><stop offset=".6" stop-color="#f0f1f3"/><stop offset="1" stop-color="#c9cacf"/></linearGradient></defs>
<rect x="0.700" y="1.200" width="44.600" height="46" rx="2" fill="#fcfcfd" stroke="#dfe2e7"/>
<rect x="1.200" y="1.700" width="43.600" height="26" fill="url(#wk)"/>
<g stroke="#c3c6cc" stroke-width="1"><path d="M6.700 19V28M11.700 19V28M16.500 2V28M21.300 19V28M26.300 19V28M31.300 19V28M36.500 2V28M41.300 19V28"/></g>
<g fill="#47629f"><rect x="5" y="2" width="3.400" height="17.500"/><rect x="10" y="2" width="3.400" height="17.500"/><rect x="19.600" y="2" width="3.400" height="17.500"/><rect x="24.600" y="2" width="3.400" height="17.500"/><rect x="29.600" y="2" width="3.400" height="17.500"/><rect x="39.600" y="2" width="3.400" height="17.500"/></g>
<rect x="0.700" y="27.600" width="44.600" height="1.700" fill="#8e8e92"/>
<rect x="0.700" y="46" width="44.600" height="2.200" rx="1" fill="#737377"/>
<text x="42.400" y="43.300" font-family="Liberation Sans, sans-serif" font-weight="bold" font-size="12" fill="#a2a2a6" text-anchor="end">VMT</text>
</svg>
<div class="t " style="left:90px;top:640.5px;font-size:15px;color:#1a1a1a;letter-spacing:-0.28px;">Virtual Music Tools</div>
<div class="t " style="left:90px;top:660.3px;font-size:13.5px;color:#6d7b8d;letter-spacing:-0.05px;">Application</div>
<div class="t " style="left:217px;top:640.5px;font-size:13.5px;color:#6d7b8d;letter-spacing:-0.26px;">Date modified:</div>
<div class="t " style="left:306px;top:640.5px;font-size:13.5px;color:#1a1a1a;letter-spacing:-0.33px;">1/9/2013 11:35 AM</div>
<div class="t " style="left:277px;top:660.3px;font-size:13.5px;color:#6d7b8d;letter-spacing:-1.58px;">Size:</div>
<div class="t " style="left:306px;top:660.3px;font-size:13.5px;color:#1a1a1a;letter-spacing:-0.71px;">9.38 MB</div>
<div class="t " style="left:456.5px;top:640.5px;font-size:13.5px;color:#6d7b8d;letter-spacing:-0.65px;">Date created:</div>
<div class="t " style="left:536.5px;top:640.5px;font-size:13.5px;color:#1a1a1a;letter-spacing:-0.56px;">2/5/2013 2:09 PM</div>
</body></html>
